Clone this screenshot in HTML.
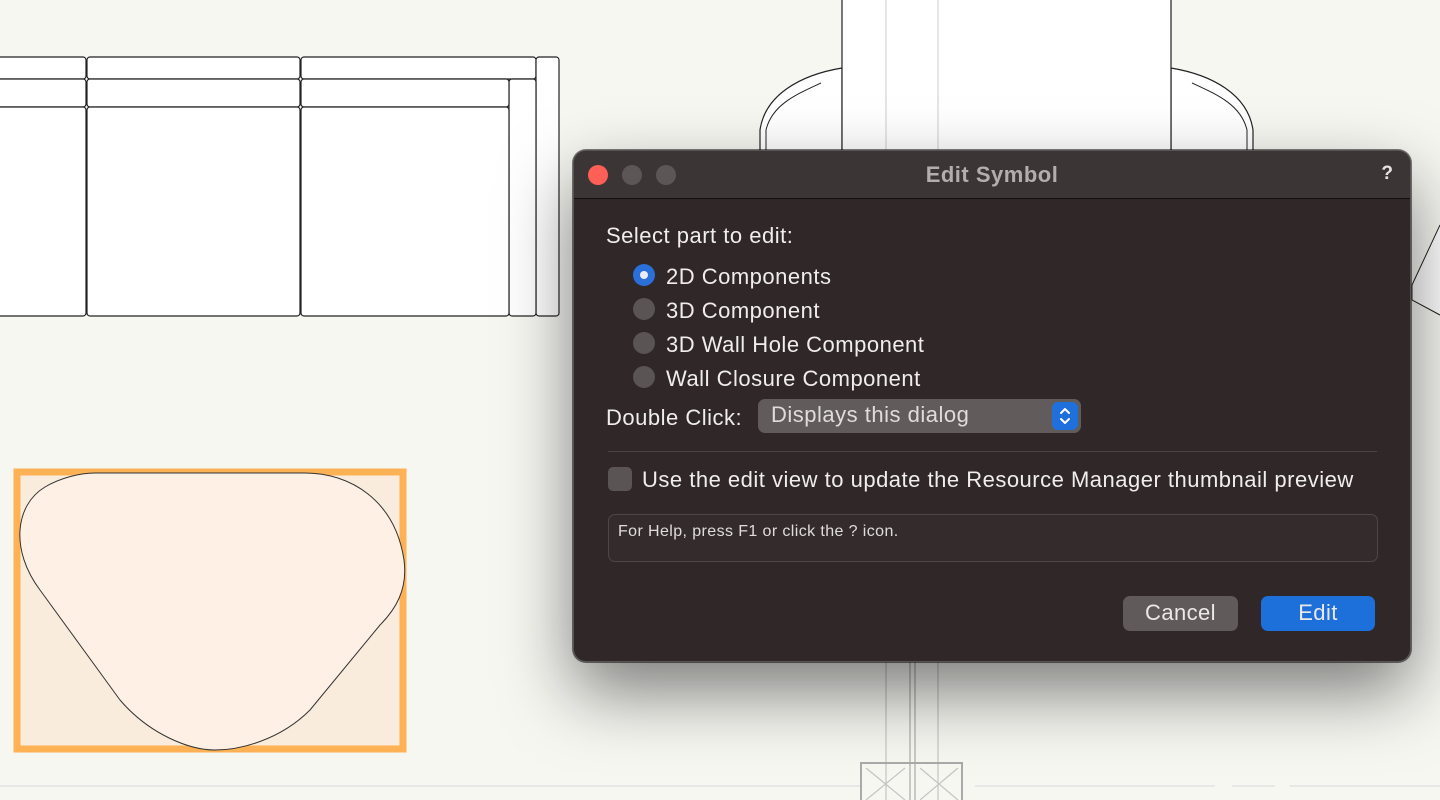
<!DOCTYPE html>
<html><head><meta charset="utf-8"><style>
*{margin:0;padding:0;box-sizing:border-box}
body{width:1440px;height:800px;overflow:hidden;background:#f7f7f2;font-family:"Liberation Sans",sans-serif;position:relative}
svg.bg{position:absolute;left:0;top:0}
.dlg{position:absolute;left:573px;top:150px;width:838px;height:512px;border-radius:13px;background:#2f2728;border:1px solid #5a5354;overflow:hidden;box-shadow:0 30px 70px rgba(0,0,0,.5),0 0 0 1px rgba(0,0,0,.5)}
.tb{height:48px;background:#3c3535;border-bottom:1px solid #141010;position:relative}
.tl{position:absolute;top:14px;width:20px;height:20px;border-radius:50%;background:#5d5656}
.title{position:absolute;left:0;right:0;top:11px;text-align:center;color:#b3adad;font-weight:bold;font-size:22px;letter-spacing:0.5px}
.q{position:absolute;right:17px;top:12px;color:#e8e4e4;font-weight:bold;font-size:19px}
.t{position:absolute;color:#f0eded;font-size:22px;letter-spacing:0.5px;white-space:nowrap}
.rad{position:absolute;width:22px;height:22px;border-radius:50%;background:#5a5454}
.rad.on{background:#2b6fd8}
.rad.on:after{content:"";position:absolute;left:7px;top:7px;width:8px;height:8px;border-radius:50%;background:#e8eef8}
.sel{position:absolute;left:184px;top:248px;width:323px;height:34px;border-radius:7px;background:#625b5b}
.arr{position:absolute;right:3px;top:3px;width:26px;height:28px;border-radius:6px;background:#1f6fdc}
.btn{position:absolute;top:445px;height:35px;border-radius:7px;color:#ece8e8;font-size:22px;letter-spacing:0.4px;text-align:center;line-height:34px}
</style></head><body>
<svg class="bg" width="1440" height="800" viewBox="0 0 1440 800">
<g fill="#fff" stroke="#222" stroke-width="1.2">
<rect x="-5" y="57" width="91" height="22" rx="3"/>
<rect x="87" y="57" width="213" height="22" rx="3"/>
<rect x="301" y="57" width="235" height="22" rx="3"/>
<rect x="536" y="57" width="23" height="259" rx="3"/>
<rect x="509" y="79" width="27" height="237" rx="3"/>
<rect x="-5" y="79" width="91" height="28" rx="3"/>
<rect x="87" y="79" width="213" height="28" rx="3"/>
<rect x="301" y="79" width="208" height="28" rx="3"/>
<rect x="-5" y="107" width="91" height="209" rx="3"/>
<rect x="87" y="107" width="213" height="209" rx="3"/>
<rect x="301" y="107" width="208" height="209" rx="3"/>
<path d="M842 68 C800 75 765 95 760 130 L760 160 L842 160Z"/>
<path d="M1171 68 C1213 75 1248 95 1253 130 L1253 160 L1171 160Z"/>
<rect x="842" y="-2" width="329" height="162"/>
</g>
<g fill="none" stroke="#222" stroke-width="1">
<path d="M821 83 C795 95 772 105 766 130 L766 160"/>
<path d="M1192 83 C1218 95 1241 105 1247 130 L1247 160"/>
</g>
<g stroke="#d4d4d4" stroke-width="1.2"><line x1="886" y1="0" x2="886" y2="150"/><line x1="938" y1="0" x2="938" y2="150"/></g>
<path d="M1440 225 L1412 285 L1412 300 L1440 315" fill="#fff" stroke="#222" stroke-width="1"/>
<rect x="17" y="472" width="386" height="277" fill="#f9ecdc" stroke="#ffb255" stroke-width="7"/>
<path d="M95 473 L305 473 C350 473 395 500 404 560 C408 590 395 610 380 625 L310 710 C280 740 240 750 215 750 C190 750 150 735 120 700 L40 590 C10 550 15 505 45 487 C60 478 80 473 95 473Z" fill="#fef0e4" stroke="#333" stroke-width="1"/>
<g stroke="#c4c4c4" stroke-width="1.2" fill="none">
<line x1="886" y1="662" x2="886" y2="800"/><line x1="938" y1="662" x2="938" y2="800"/>
<line x1="910" y1="662" x2="910" y2="800" stroke="#aaa"/><line x1="915" y1="662" x2="915" y2="800" stroke="#aaa"/>
<rect x="861" y="763" width="101" height="40" stroke="#aaa" stroke-width="2"/>
<path d="M866 768 L905 800 M905 768 L866 800 M920 768 L958 800 M958 768 L920 800"/>
<path d="M0 786 H860 M975 786 H1215 M1232 786 H1275 M1290 786 H1440" stroke="#ddd"/>
</g>
</svg>
<div class="dlg">
<div class="tb">
<div class="tl" style="left:14px;background:#fe5f57"></div>
<div class="tl" style="left:48px"></div>
<div class="tl" style="left:82px"></div>
<div class="title">Edit Symbol</div>
<div class="q">?</div>
</div>
<div class="t" style="left:32px;top:72px">Select part to edit:</div>
<div class="rad on" style="left:59px;top:113px"></div><div class="t" style="left:92px;top:113px">2D Components</div>
<div class="rad" style="left:59px;top:147px"></div><div class="t" style="left:92px;top:147px">3D Component</div>
<div class="rad" style="left:59px;top:181px"></div><div class="t" style="left:92px;top:181px">3D Wall Hole Component</div>
<div class="rad" style="left:59px;top:215px"></div><div class="t" style="left:92px;top:215px">Wall Closure Component</div>
<div class="t" style="left:32px;top:254px">Double Click:</div>
<div class="sel"><div class="t" style="left:13px;top:3px;color:#e0dcdc">Displays this dialog</div>
<div class="arr"><svg width="26" height="28" viewBox="0 0 26 28"><path d="M9 11 L13 7 L17 11 M9 17 L13 21 L17 17" fill="none" stroke="#fff" stroke-width="2" stroke-linecap="round" stroke-linejoin="round"/></svg></div></div>
<div style="position:absolute;left:34px;right:33px;top:300px;height:1px;background:#4a4243"></div>
<div style="position:absolute;left:34px;top:316px;width:24px;height:24px;border-radius:5px;background:#5a5454"></div>
<div class="t" style="left:68px;top:316px">Use the edit view to update the Resource Manager thumbnail preview</div>
<div style="position:absolute;left:34px;top:363px;width:770px;height:48px;border:1px solid #4e4647;border-radius:7px;background:#332b2c"></div>
<div class="t" style="left:44px;top:372px;font-size:16px;letter-spacing:0.4px;color:#e0dcdc">For Help, press F1 or click the ? icon.</div>
<div class="btn" style="left:549px;width:115px;background:#615a5a">Cancel</div>
<div class="btn" style="left:687px;width:114px;background:#1d6fd9">Edit</div>
</div>
</body></html>
